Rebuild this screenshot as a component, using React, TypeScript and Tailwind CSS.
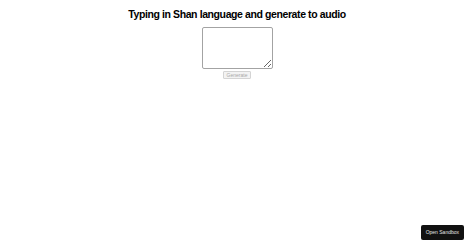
export default function App() {
  return (
    <div className="relative h-[248px] w-full bg-white" style={{ fontFamily: '"Liberation Sans", Arial, sans-serif' }}>
      <div className="flex flex-col items-center pt-[8px]">
        <h1 className="text-[10.5px] font-bold leading-[13px] tracking-[-0.4px] text-black">Typing in Shan language and generate to audio</h1>
        <textarea className="mt-[6px] h-[42px] w-[71px] resize-y rounded-[2px] border border-[#a3a3a3] bg-white" />
        <button
          disabled
          className="mt-[2px] h-[8px] rounded-[1px] border border-[#d4d4d4] bg-[#f3f3f3] px-[3px] text-[5px] leading-none text-[#a8a8a8]"
        >
          Generate
        </button>
      </div>
      <button className="absolute bottom-[8px] right-[10px] h-[15px] rounded-[2px] bg-[#111] px-[5px] text-[5px] leading-none text-[#e5e5e5]">
        Open Sandbox
      </button>
    </div>
  )
}
